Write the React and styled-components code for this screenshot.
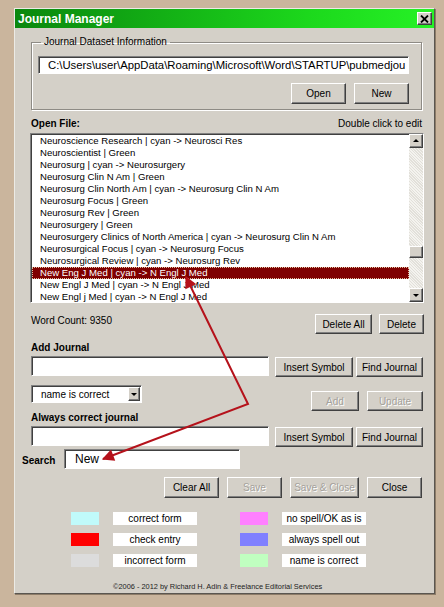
import React from "react";
import styled, { createGlobalStyle, css } from "styled-components";

const GlobalStyle = createGlobalStyle`
  html, body {
    margin: 0;
    padding: 0;
    background: #cab59d;
  }
  body {
    font-family: "Liberation Sans", Arial, sans-serif;
    color: #000;
  }
`;

const raised = css`
  background: #d4d0c8;
  border: 1px solid;
  border-color: #ffffff #404040 #404040 #ffffff;
  box-shadow: inset -1px -1px 0 #808080;
`;

const sunken = css`
  background: #fff;
  border: 1px solid;
  border-color: #808080 #ffffff #ffffff #808080;
  box-shadow: inset 1px 1px 0 #404040;
`;

const Page = styled.div`
  position: relative;
  width: 444px;
  height: 607px;
  padding: 8px 0 0 14px;
  box-sizing: border-box;
  overflow: hidden;
`;

const Window = styled.div`
  width: 421px;
  height: 586px;
  box-sizing: border-box;
  background: #d4d0c8;
  border: 1px solid;
  border-color: #ecebe6 #5a5650 #5a5650 #ecebe6;
  box-shadow: 1px 1px 0 #8d7c68;
  display: flex;
  flex-direction: column;
`;

const TitleBar = styled.div`
  height: 19px;
  display: flex;
  align-items: center;
  justify-content: space-between;
  padding: 0 2px 0 3px;
  background: linear-gradient(to right, #0a870e, #1cd81c 70%, #26f226);
`;

const Title = styled.span`
  color: #fff;
  font-weight: bold;
  font-size: 12px;
`;

const CloseBox = styled.div`
  ${raised};
  width: 15px;
  height: 13px;
  box-sizing: border-box;
  display: flex;
  align-items: center;
  justify-content: center;
`;

const Body = styled.div`
  flex: 1;
  display: flex;
  flex-direction: column;
  padding: 0 10px 0 16px;
  font-size: 10px;
`;

const GroupBox = styled.fieldset`
  margin: 8px 2px 0 0;
  padding: 0 12px 5px 6px;
  min-width: 0;
  border: 1px solid #8e8b85;
  box-shadow: inset 1px 1px 0 #fff, 1px 1px 0 #fff;
  legend {
    margin-left: 3px;
    padding: 0 3px;
    font-size: 10px;
    line-height: 12px;
  }
`;

const PathField = styled.div`
  ${sunken};
  height: 18px;
  margin-top: 8px;
  padding-left: 9px;
  box-sizing: border-box;
  font-size: 11.3px;
  line-height: 17px;
  white-space: nowrap;
  overflow: hidden;
`;

const ButtonRow = styled.div`
  display: flex;
  justify-content: flex-end;
  align-items: flex-start;
  gap: ${(p) => p.$gap ?? 8}px;
  margin-top: ${(p) => p.$top ?? 0}px;
  margin-right: ${(p) => p.$right ?? 0}px;
`;

const Button = styled.div`
  ${raised};
  box-sizing: border-box;
  width: ${(p) => p.$w}px;
  height: ${(p) => p.$h ?? 21}px;
  margin-top: ${(p) => p.$top ?? 0}px;
  display: flex;
  align-items: center;
  justify-content: center;
  font-size: 10px;
  color: ${(p) => (p.$disabled ? "#a4a19b" : "#000")};
  text-shadow: ${(p) => (p.$disabled ? "1px 1px 0 #fff" : "none")};
  white-space: nowrap;
`;

const HeaderRow = styled.div`
  display: flex;
  justify-content: space-between;
  margin-top: 8px;
  line-height: 12px;
  padding-right: 2px;
`;

const Bold = styled.div`
  font-weight: bold;
  line-height: 12px;
  margin-top: ${(p) => p.$top ?? 0}px;
`;

const ListBox = styled.div`
  ${sunken};
  display: flex;
  height: 170px;
  margin: 3px 0 0 -1px;
  box-sizing: border-box;
  overflow: hidden;
`;

const Rows = styled.div`
  flex: 1;
  padding: 1px 0 0 1px;
  min-width: 0;
`;

const Row = styled.div`
  height: 12px;
  line-height: 12px;
  padding-left: 8px;
  font-size: 9.6px;
  white-space: nowrap;
  ${(p) =>
    p.$selected &&
    css`
      background: #7f0000;
      color: #fff;
      outline: 1px dotted #e0c0a0;
      outline-offset: -1px;
    `}
`;

const ScrollBar = styled.div`
  width: 14px;
  display: flex;
  flex-direction: column;
  background-color: #eceae5;
  background-image: repeating-linear-gradient(45deg, #f4f3ef 0 1px, #e2e0da 1px 2px);
`;

const ScrollButton = styled.div`
  ${raised};
  height: 14px;
  box-sizing: border-box;
  display: flex;
  align-items: center;
  justify-content: center;
  &::after {
    content: "";
    border-left: 3px solid transparent;
    border-right: 3px solid transparent;
    ${(p) =>
      p.$down
        ? "border-top: 3px solid #000; margin-top: 1px;"
        : "border-bottom: 3px solid #000; margin-bottom: 1px;"}
  }
`;

const Track = styled.div`
  flex: 1;
`;

const Thumb = styled.div`
  ${raised};
  height: 10px;
  margin-top: ${(p) => p.$offset}px;
`;

const SplitRow = styled.div`
  display: flex;
  justify-content: ${(p) => (p.$start ? "flex-start" : "space-between")};
  align-items: flex-start;
  margin-top: ${(p) => p.$top ?? 0}px;
  margin-left: ${(p) => p.$left ?? 0}px;
`;

const Plain = styled.div`
  line-height: 12px;
  margin-top: ${(p) => p.$top ?? 0}px;
  font-weight: ${(p) => (p.$bold ? "bold" : "normal")};
  width: ${(p) => (p.$w ? `${p.$w}px` : "auto")};
`;

const TextBox = styled.div`
  ${sunken};
  box-sizing: border-box;
  width: ${(p) => p.$w}px;
  height: 20px;
  padding-left: 10px;
  font-size: 12px;
  line-height: 19px;
`;

const Combo = styled.div`
  ${sunken};
  box-sizing: border-box;
  width: 111px;
  height: 18px;
  display: flex;
  align-items: center;
  justify-content: space-between;
  padding: 0 1px 0 9px;
  font-size: 10px;
`;

const ComboButton = styled.div`
  ${raised};
  width: 12px;
  height: 14px;
  box-sizing: border-box;
  display: flex;
  align-items: center;
  justify-content: center;
  &::after {
    content: "";
    border-left: 3px solid transparent;
    border-right: 3px solid transparent;
    border-top: 3px solid #000;
  }
`;

const Legend = styled.div`
  display: grid;
  grid-template-columns: 126px 126px;
  column-gap: 43px;
  row-gap: 8px;
  margin: 14px 0 0 40px;
`;

const LegendItem = styled.div`
  display: flex;
  gap: 14px;
  height: 13px;
`;

const Swatch = styled.div`
  width: 28px;
  height: 13px;
  background: ${(p) => p.$color};
`;

const LegendLabel = styled.div`
  width: 84px;
  background: #fff;
  text-align: center;
  font-size: 10px;
  line-height: 13px;
`;

const Copyright = styled.div`
  margin-top: 15px;
  padding-left: 82px;
  font-size: 7.4px;
  line-height: 9px;
  color: #222;
  white-space: nowrap;
`;

const Overlay = styled.svg`
  position: absolute;
  left: 0;
  top: 0;
  pointer-events: none;
`;

const journals = [
  "Neuroscience Research | cyan -> Neurosci Res",
  "Neuroscientist | Green",
  "Neurosurg | cyan -> Neurosurgery",
  "Neurosurg Clin N Am | Green",
  "Neurosurg Clin North Am | cyan -> Neurosurg Clin N Am",
  "Neurosurg Focus | Green",
  "Neurosurg Rev | Green",
  "Neurosurgery | Green",
  "Neurosurgery Clinics of North America | cyan -> Neurosurg Clin N Am",
  "Neurosurgical Focus | cyan -> Neurosurg Focus",
  "Neurosurgical Review | cyan -> Neurosurg Rev",
  "New Eng J Med | cyan -> N Engl J Med",
  "New Engl J Med | cyan -> N Engl J Med",
  "New Engl j Med | cyan -> N Engl J Med",
];

const legend = [
  ["#c0fafa", "correct form"],
  ["#ff80ff", "no spell/OK as is"],
  ["#ff0000", "check entry"],
  ["#8080ff", "always spell out"],
  ["#dcdcdc", "incorrect form"],
  ["#c0ffc0", "name is correct"],
];

export default function App() {
  return (
    <Page>
      <GlobalStyle />
      <Window>
        <TitleBar>
          <Title>Journal Manager</Title>
          <CloseBox>
            <svg width="9" height="8" viewBox="0 0 9 8">
              <path d="M1 0.5 L8 7.5 M8 0.5 L1 7.5" stroke="#000" strokeWidth="1.8" />
            </svg>
          </CloseBox>
        </TitleBar>
        <Body>
          <GroupBox>
            <legend>Journal Dataset Information</legend>
            <PathField>C:\Users\user\AppData\Roaming\Microsoft\Word\STARTUP\pubmedjou</PathField>
            <ButtonRow $top={9}>
              <Button $w={55}>Open</Button>
              <Button $w={55}>New</Button>
            </ButtonRow>
          </GroupBox>

          <HeaderRow>
            <Bold>Open File:</Bold>
            <span>Double click to edit</span>
          </HeaderRow>
          <ListBox>
            <Rows>
              {journals.map((j, i) => (
                <Row key={j + i} $selected={i === 11}>
                  {j}
                </Row>
              ))}
            </Rows>
            <ScrollBar>
              <ScrollButton />
              <Track>
                <Thumb $offset={98} />
              </Track>
              <ScrollButton $down />
            </ScrollBar>
          </ListBox>

          <SplitRow $top={11}>
            <Plain $top={1}>Word Count: 9350</Plain>
            <ButtonRow $gap={7}>
              <Button $w={57} $h={20}>Delete All</Button>
              <Button $w={45} $h={20}>Delete</Button>
            </ButtonRow>
          </SplitRow>

          <Bold $top={8}>Add Journal</Bold>
          <SplitRow $top={2}>
            <TextBox $w={238} />
            <ButtonRow $gap={3} $right={1}>
              <Button $w={78} $h={20} $top={1}>Insert Symbol</Button>
              <Button $w={67} $h={20} $top={1}>Find Journal</Button>
            </ButtonRow>
          </SplitRow>

          <SplitRow $top={8}>
            <Combo>
              name is correct
              <ComboButton />
            </Combo>
            <ButtonRow $gap={8} $right={1}>
              <Button $w={48} $h={20} $top={6} $disabled>Add</Button>
              <Button $w={56} $h={20} $top={6} $disabled>Update</Button>
            </ButtonRow>
          </SplitRow>

          <Bold $top={1}>Always correct journal</Bold>
          <SplitRow $top={2}>
            <TextBox $w={238} />
            <ButtonRow $gap={3} $right={1}>
              <Button $w={78} $h={20} $top={1}>Insert Symbol</Button>
              <Button $w={67} $h={20} $top={1}>Find Journal</Button>
            </ButtonRow>
          </SplitRow>

          <SplitRow $top={2} $left={-9} $start>
            <Plain $bold $w={42} $top={6}>Search</Plain>
            <TextBox $w={176}>New</TextBox>
          </SplitRow>

          <ButtonRow $top={8} $right={2}>
            <Button $w={55}>Clear All</Button>
            <Button $w={55} $disabled>Save</Button>
            <Button $w={69} $disabled>Save &amp; Close</Button>
            <Button $w={55}>Close</Button>
          </ButtonRow>

          <Legend>
            {legend.map(([color, label]) => (
              <LegendItem key={label}>
                <Swatch $color={color} />
                <LegendLabel>{label}</LegendLabel>
              </LegendItem>
            ))}
          </Legend>

          <Copyright>©2006 - 2012 by Richard H. Adin &amp; Freelance Editorial Services</Copyright>
        </Body>
      </Window>

      <Overlay width="444" height="607" viewBox="0 0 444 607">
        <defs>
          <marker
            id="head"
            viewBox="0 0 10 10"
            refX="9"
            refY="5"
            markerWidth="7"
            markerHeight="6"
            orient="auto-start-reverse"
          >
            <path d="M0 0 L10 5 L0 10 Z" fill="#b5121b" />
          </marker>
        </defs>
        <polyline
          points="186,277 248,404 103,459"
          fill="none"
          stroke="#b5121b"
          strokeWidth="2"
          markerStart="url(#head)"
          markerEnd="url(#head)"
        />
      </Overlay>
    </Page>
  );
}
